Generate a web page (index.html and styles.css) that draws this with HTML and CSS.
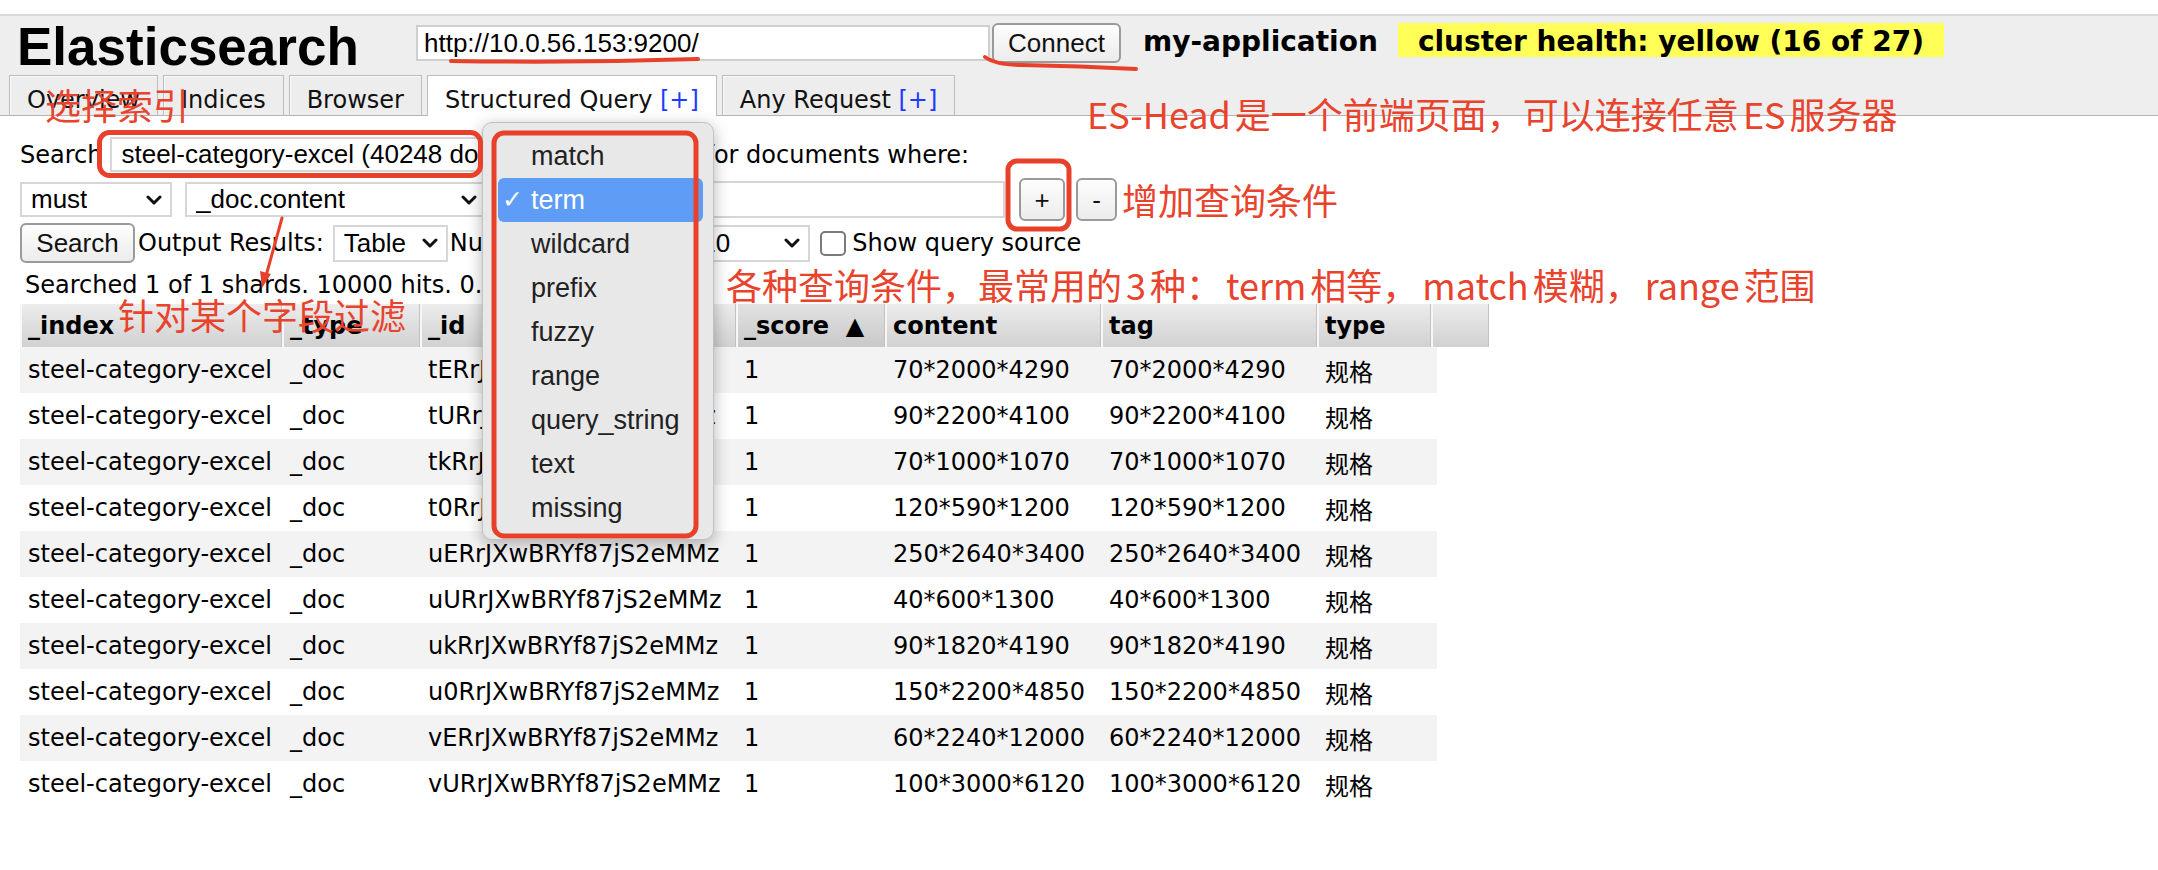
FILE: index.html
```html
<!DOCTYPE html>
<html lang="zh-CN">
<head>
<meta charset="utf-8">
<title>Elasticsearch Head - Structured Query</title>
<link rel="stylesheet" href="styles.css">
</head>
<body>
<header class="app-header">
  <div class="header-top">
    <h1 class="logo">Elasticsearch</h1>
    <input class="url-input" type="text" value="http://10.0.56.153:9200/">
    <button class="btn connect-btn">Connect</button>
    <span class="cluster-name">my-application</span>
    <span class="cluster-health">cluster health: yellow (16 of 27)</span>
  </div>
  <nav class="tabs">
    <div class="tab">Overview</div>
    <div class="tab">Indices</div>
    <div class="tab">Browser</div>
    <div class="tab active">Structured Query <span class="plus">[+]</span></div>
    <div class="tab">Any Request <span class="plus">[+]</span></div>
  </nav>
</header>

<main class="query">
  <div class="row row-index">
    <span class="label">Search</span>
    <div class="select select-index"><span>steel-category-excel (40248 docs)</span><svg class="chev" viewBox="0 0 16 10"><path d="M2 2 L8 8 L14 2"/></svg></div>
    <span class="label">for documents where:</span>
  </div>

  <div class="row row-filter">
    <div class="select select-must"><span>must</span><svg class="chev" viewBox="0 0 16 10"><path d="M2 2 L8 8 L14 2"/></svg></div>
    <div class="select select-field"><span>_doc.content</span><svg class="chev" viewBox="0 0 16 10"><path d="M2 2 L8 8 L14 2"/></svg></div>
    <div class="select select-op"><span>term</span><svg class="chev" viewBox="0 0 16 10"><path d="M2 2 L8 8 L14 2"/></svg></div>
    <input class="text-input" type="text" value="">
    <button class="btn btn-plus">+</button>
    <button class="btn btn-minus">-</button>
  </div>

  <div class="row row-output">
    <button class="btn btn-search">Search</button>
    <span class="label label-output">Output Results:</span>
    <div class="select select-table"><span>Table</span><svg class="chev" viewBox="0 0 16 10"><path d="M2 2 L8 8 L14 2"/></svg></div>
    <span class="label label-num">Number of Results:</span>
    <div class="select select-num"><span>10</span><svg class="chev" viewBox="0 0 16 10"><path d="M2 2 L8 8 L14 2"/></svg></div>
    <span class="checkbox"></span>
    <span class="label label-source">Show query source</span>
  </div>

  <div class="summary">Searched 1 of 1 shards. 10000 hits. 0.046 seconds</div>

  <div class="results">
    <table class="results-table head-table">
      <colgroup>
        <col class="c-index"><col class="c-type"><col class="c-id"><col class="c-score"><col class="c-content"><col class="c-tag"><col class="c-kind"><col class="c-pad">
      </colgroup>
      <thead>
        <tr><th>_index</th><th>_type</th><th>_id</th><th class="sorted">_score&nbsp; ▲</th><th>content</th><th>tag</th><th>type</th><th></th></tr>
      </thead>
    </table>
    <table class="results-table body-table">
      <colgroup>
        <col class="c-index"><col class="c-type"><col class="c-id"><col class="c-score"><col class="c-content"><col class="c-tag"><col class="c-kind-body">
      </colgroup>
      <tbody>
        <tr><td>steel-category-excel</td><td>_doc</td><td>tERrJXwBRYf87jS2eMMz</td><td>1</td><td>70*2000*4290</td><td>70*2000*4290</td><td>规格</td></tr>
        <tr><td>steel-category-excel</td><td>_doc</td><td>tURrJXwBRYf87jS2eMMz</td><td>1</td><td>90*2200*4100</td><td>90*2200*4100</td><td>规格</td></tr>
        <tr><td>steel-category-excel</td><td>_doc</td><td>tkRrJXwBRYf87jS2eMMz</td><td>1</td><td>70*1000*1070</td><td>70*1000*1070</td><td>规格</td></tr>
        <tr><td>steel-category-excel</td><td>_doc</td><td>t0RrJXwBRYf87jS2eMMz</td><td>1</td><td>120*590*1200</td><td>120*590*1200</td><td>规格</td></tr>
        <tr><td>steel-category-excel</td><td>_doc</td><td>uERrJXwBRYf87jS2eMMz</td><td>1</td><td>250*2640*3400</td><td>250*2640*3400</td><td>规格</td></tr>
        <tr><td>steel-category-excel</td><td>_doc</td><td>uURrJXwBRYf87jS2eMMz</td><td>1</td><td>40*600*1300</td><td>40*600*1300</td><td>规格</td></tr>
        <tr><td>steel-category-excel</td><td>_doc</td><td>ukRrJXwBRYf87jS2eMMz</td><td>1</td><td>90*1820*4190</td><td>90*1820*4190</td><td>规格</td></tr>
        <tr><td>steel-category-excel</td><td>_doc</td><td>u0RrJXwBRYf87jS2eMMz</td><td>1</td><td>150*2200*4850</td><td>150*2200*4850</td><td>规格</td></tr>
        <tr><td>steel-category-excel</td><td>_doc</td><td>vERrJXwBRYf87jS2eMMz</td><td>1</td><td>60*2240*12000</td><td>60*2240*12000</td><td>规格</td></tr>
        <tr><td>steel-category-excel</td><td>_doc</td><td>vURrJXwBRYf87jS2eMMz</td><td>1</td><td>100*3000*6120</td><td>100*3000*6120</td><td>规格</td></tr>
      </tbody>
    </table>
  </div>
</main>

<div class="dropdown">
  <div class="dd-item">match</div>
  <div class="dd-item selected"><span class="check">✓</span>term</div>
  <div class="dd-item">wildcard</div>
  <div class="dd-item">prefix</div>
  <div class="dd-item">fuzzy</div>
  <div class="dd-item">range</div>
  <div class="dd-item">query_string</div>
  <div class="dd-item">text</div>
  <div class="dd-item">missing</div>
</div>

<svg class="marks" width="2158" height="870" viewBox="0 0 2158 870">
  <g fill="none" stroke="#e8412b" stroke-width="5" stroke-linecap="round" stroke-linejoin="round">
    <rect x="99.5" y="132.5" width="381" height="43" rx="10"/>
    <rect x="494" y="133" width="202" height="403" rx="10"/>
    <rect x="1008" y="161" width="61" height="68" rx="9"/>
    <path d="M451 61 Q575 63 698 59" stroke-width="4"/>
    <path d="M985 57 Q996 65 1022 65 Q1080 66 1136 69" stroke-width="4"/>
    <path d="M282 218 L266 276" stroke-width="3"/>
  </g>
  <polygon points="262,288 271,274 260,271" fill="#e8412b"/>
</svg>

<span class="note note-index">选择索引</span>
<span class="note note-eshead"><span class="lat">ES-Head</span>是一个前端页面，可以连接任意<span class="lat">ES</span>服务器</span>
<span class="note note-add">增加查询条件</span>
<span class="note note-cond">各种查询条件，最常用的<span class="lat">3</span>种：<span class="lat">term</span>相等，<span class="lat">match</span>模糊，<span class="lat">range</span>范围</span>
<span class="note note-field">针对某个字段过滤</span>
</body>
</html>
```

FILE: styles.css
```css
html, body {
  margin: 0;
  padding: 0;
  background: #ffffff;
}

body {
  position: relative;
  width: 2158px;
  height: 870px;
  overflow: hidden;
  font-family: "DejaVu Sans", "Noto Sans CJK SC", sans-serif;
  font-size: 24px;
  color: #000;
}

/* ---------- header ---------- */
.app-header {
  margin-top: 14px;
  border-top: 2px solid #dadada;
  border-bottom: 1px solid #b4b4b4;
  background: #eeeeee;
}

.header-top {
  display: flex;
  align-items: flex-start;
  height: 59px;
}

.logo {
  flex: none;
  width: 399px;
  margin: 5px 0 0 17px;
  font: bold 53px/52px "Liberation Sans", Arial, sans-serif;
  color: #000;
}

.url-input {
  flex: none;
  margin-top: 9px;
  width: 574px;
  height: 36px;
  box-sizing: border-box;
  border: 2px solid #cfcfcf;
  padding: 0 6px;
  background: #fff;
  font: 26px "Liberation Sans", Arial, sans-serif;
  color: #000;
  outline: none;
}

.btn {
  flex: none;
  box-sizing: border-box;
  display: inline-flex;
  align-items: center;
  justify-content: center;
  padding: 0;
  border: 2px solid #9a9a9a;
  border-radius: 6px;
  background: linear-gradient(#fdfdfd, #ececec);
  font: 26px/1 "Liberation Sans", Arial, sans-serif;
  color: #111;
}

.connect-btn {
  margin: 7px 0 0 2px;
  width: 129px;
  height: 40px;
}

.cluster-name {
  flex: none;
  margin: 9px 0 0 22px;
  font: bold 28px/34px "DejaVu Sans", sans-serif;
}

.cluster-health {
  flex: none;
  margin: 7px 0 0 20px;
  height: 34px;
  box-sizing: border-box;
  padding: 3px 20px 0;
  background: #ffff57;
  font: bold 28px/31px "DejaVu Sans", sans-serif;
  white-space: nowrap;
}

/* ---------- tabs ---------- */
.tabs {
  display: flex;
  align-items: flex-end;
  height: 40px;
  padding-left: 9px;
}

.tab {
  box-sizing: border-box;
  height: 40px;
  padding: 10px 17px 0;
  margin-right: 5px;
  border: 1px solid #bcbcbc;
  border-bottom: 0;
  background: #ededed;
  box-shadow: inset 1px 1px 0 #fafafa;
  line-height: 28px;
  white-space: nowrap;
  color: #111;
}

.tab.active {
  position: relative;
  height: 41px;
  margin-bottom: -1px;
  background: #ffffff;
  box-shadow: none;
}

.plus {
  color: #1f3bff;
}

/* ---------- query form ---------- */
.query {
  padding: 21px 20px 0;
}

.row {
  display: flex;
  align-items: center;
}

.row-index { height: 35px; }
.row-filter { height: 43px; margin-top: 6px; }
.row-output { height: 40px; margin-top: 2px; }

.label {
  flex: none;
  white-space: nowrap;
}

.select {
  flex: none;
  box-sizing: border-box;
  display: flex;
  align-items: center;
  justify-content: space-between;
  height: 35px;
  padding: 0 8px 0 9px;
  border: 2px solid #d6d6d6;
  background: #fff;
  font: 26px "Liberation Sans", Arial, sans-serif;
  color: #000;
  white-space: nowrap;
  overflow: hidden;
}

.select span {
  overflow: hidden;
}

.chev {
  flex: none;
  width: 16px;
  height: 10px;
  margin-left: 6px;
}

.chev path {
  fill: none;
  stroke: #111;
  stroke-width: 3;
  stroke-linecap: round;
  stroke-linejoin: round;
}

.select-index { width: 587px; margin: 0 8px; }
.select-must { width: 152px; margin-right: 13px; }
.select-field { width: 302px; margin-right: 10px; }
.select-op { width: 143px; margin-right: 12px; }

.text-input {
  flex: none;
  width: 353px;
  height: 37px;
  box-sizing: border-box;
  margin-right: 14px;
  border: 2px solid #d6d6d6;
  background: #fff;
  font: 26px "Liberation Sans", Arial, sans-serif;
  outline: none;
}

.btn-plus { width: 46px; height: 43px; margin-right: 11px; }
.btn-minus { width: 41px; height: 43px; }

.btn-search { width: 115px; height: 40px; }
.label-output { margin-left: 3px; }
.select-table { width: 115px; height: 37px; margin-left: 9px; }
.label-num { margin-left: 2px; }
.select-num { width: 120px; height: 37px; margin-left: 11px; }

.checkbox {
  flex: none;
  width: 26px;
  height: 25px;
  box-sizing: border-box;
  margin-left: 10px;
  border: 2px solid #7a7a7a;
  border-radius: 5px;
  background: #fff;
}

.label-source { margin-left: 6px; }

.summary {
  margin-top: 8px;
  padding-left: 5px;
  height: 28px;
  line-height: 28px;
  white-space: nowrap;
}

/* ---------- results table ---------- */
.results {
  margin-top: 5px;
}

.results-table {
  border-collapse: collapse;
  border-spacing: 0;
  table-layout: fixed;
}

.head-table { width: 1469px; }
.body-table { width: 1417px; }

.c-index { width: 262px; }
.c-type { width: 138px; }
.c-id { width: 316px; }
.c-score { width: 149px; }
.c-content { width: 216px; }
.c-tag { width: 216px; }
.c-kind { width: 114px; }
.c-pad { width: 58px; }
.c-kind-body { width: 120px; }

.results-table th {
  height: 43px;
  padding: 0 8px;
  text-align: left;
  font-weight: bold;
  white-space: nowrap;
  overflow: hidden;
  background: linear-gradient(#ececec, #d1d1d1);
  box-shadow: inset 2px 0 0 #f7f7f7, inset -1px 0 0 #c2c2c2;
}

.results-table th.sorted {
  background: linear-gradient(#e2e2e2, #c9c9c9);
}

.results-table td {
  height: 46px;
  padding: 0 8px;
  white-space: nowrap;
  overflow: hidden;
}

.body-table tr:nth-child(odd) td {
  background: #f3f3f3;
}

/* ---------- open select menu ---------- */
.dropdown {
  position: absolute;
  left: 482px;
  top: 122px;
  z-index: 5;
  width: 232px;
  height: 418px;
  box-sizing: border-box;
  padding: 11px 0;
  border: 1px solid #c2c2c2;
  border-radius: 10px;
  background: #e8e8e8;
  box-shadow: 0 4px 16px rgba(0, 0, 0, 0.3);
  font: 27px "Liberation Sans", Arial, sans-serif;
  color: #222;
}

.dd-item {
  position: relative;
  height: 44px;
  line-height: 44px;
  margin: 0 10px 0 15px;
  padding-left: 33px;
  border-radius: 6px;
  white-space: nowrap;
}

.dd-item.selected {
  background: #5f9cf5;
  color: #fff;
}

.check {
  position: absolute;
  left: 4px;
  top: 0;
  font: bold 25px/44px "DejaVu Sans", sans-serif;
  color: #fff;
}

/* ---------- red annotations ---------- */
.marks {
  position: absolute;
  left: 0;
  top: 0;
  z-index: 9;
  pointer-events: none;
}

.note {
  position: absolute;
  z-index: 10;
  font-family: "Noto Sans CJK SC", sans-serif;
  font-size: 36px;
  line-height: 36px;
  font-weight: 400;
  color: #e8432d;
  white-space: nowrap;
}

.note .lat {
  margin: 0 4px;
}

.note-eshead .lat:first-child {
  margin-left: 0;
}

.note-index { left: 45px; top: 86px; }
.note-eshead { left: 1087px; top: 95px; }
.note-add { left: 1122px; top: 181px; }
.note-cond { left: 726px; top: 266px; }
.note-field { left: 118px; top: 296px; }
```
